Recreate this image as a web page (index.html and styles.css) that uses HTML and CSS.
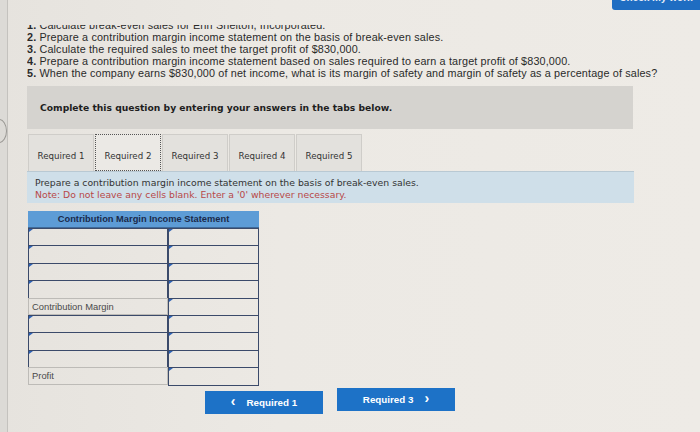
FILE: index.html
```html
<!DOCTYPE html>
<html>
<head>
<meta charset="utf-8">
<link rel="stylesheet" href="styles.css">
</head>
<body>
<div class="page">
  <div class="rail"><div class="rail-knob"></div></div>
  <div class="main">
    <div class="topbar"><div class="check-btn"><span class="check-text">Check my work</span></div></div>
    <div class="questions">
      <ol class="qlist">
        <li><b>1.</b> Calculate break-even sales for Erin Shelton, Incorporated.</li>
        <li><b>2.</b> Prepare a contribution margin income statement on the basis of break-even sales.</li>
        <li><b>3.</b> Calculate the required sales to meet the target profit of $830,000.</li>
        <li><b>4.</b> Prepare a contribution margin income statement based on sales required to earn a target profit of $830,000.</li>
        <li><b>5.</b> When the company earns $830,000 of net income, what is its margin of safety and margin of safety as a percentage of sales?</li>
      </ol>
    </div>
    <div class="instruct">Complete this question by entering your answers in the tabs below.</div>
    <div class="tabs">
      <div class="tab">Required 1</div>
      <div class="tab active">Required 2</div>
      <div class="tab">Required 3</div>
      <div class="tab">Required 4</div>
      <div class="tab">Required 5</div>
    </div>
    <div class="panel">
      <div>Prepare a contribution margin income statement on the basis of break-even sales.</div>
      <div class="note">Note: Do not leave any cells blank. Enter a '0' wherever necessary.</div>
    </div>
    <div class="stmt">
      <div class="stmt-head">Contribution Margin Income Statement</div>
      <div class="grid">
        <div class="cell in"></div><div class="cell in"></div>
        <div class="cell in"></div><div class="cell in"></div>
        <div class="cell in"></div><div class="cell in"></div>
        <div class="cell in"></div><div class="cell in"></div>
        <div class="cell label">Contribution Margin</div><div class="cell in"></div>
        <div class="cell in"></div><div class="cell in"></div>
        <div class="cell in"></div><div class="cell in"></div>
        <div class="cell in"></div><div class="cell in"></div>
        <div class="cell label">Profit</div><div class="cell in"></div>
      </div>
    </div>
    <div class="nav">
      <div class="nav-btn prev"><span class="chev">&lsaquo;</span>Required 1</div>
      <div class="nav-btn next">Required 3<span class="chev">&rsaquo;</span></div>
    </div>
  </div>
</div>
</body>
</html>
```
FILE: styles.css
```css
html, body {
  margin: 0;
  padding: 0;
  background: #ebe8e3;
  overflow: hidden;
}
.page {
  display: flex;
  width: 700px;
  height: 432px;
  overflow: hidden;
  background: linear-gradient(90deg, #e6e3de 0%, #ece9e4 40%, #eeebe6 100%);
}
.rail {
  width: 7px;
  flex: none;
  background: #dcdad6;
  border-right: 1px solid #c4c2be;
  overflow: hidden;
}
.rail-knob {
  width: 14px;
  height: 22px;
  margin-top: 119px;
  margin-left: -9px;
  border: 1px solid #9a9894;
  border-radius: 50%;
}
.main {
  flex: 1;
  padding-left: 19px;
  display: flex;
  flex-direction: column;
}
.topbar {
  height: 25px;
  flex: none;
  display: flex;
  justify-content: flex-end;
  align-items: flex-start;
}
.check-btn {
  width: 88px;
  height: 10px;
  background: #1f6dc2;
  border-radius: 0 0 0 3px;
  overflow: hidden;
  display: flex;
  align-items: flex-start;
  justify-content: center;
}
.check-text {
  font-family: "Liberation Sans", sans-serif;
  font-weight: bold;
  font-size: 10px;
  line-height: 10px;
  margin-top: -7px;
  color: #e8eef8;
  white-space: nowrap;
}
.questions {
  height: 57px;
  flex: none;
  overflow: hidden;
  font-family: "Liberation Sans", sans-serif;
  font-size: 10.8px;
  letter-spacing: 0.15px;
  color: #2a2a2a;
}
.qlist {
  list-style: none;
  margin: -6px 0 0 0;
  padding: 0;
  line-height: 12.1px;
}
.qlist li { white-space: nowrap; }
.qlist b { font-weight: 700; }
.instruct {
  margin-top: 4px;
  width: 593px;
  height: 43px;
  flex: none;
  background: #d5d3cf;
  font-family: "DejaVu Sans", sans-serif;
  font-weight: bold;
  font-size: 9.2px;
  color: #1e1e1e;
  display: flex;
  align-items: center;
  padding-left: 13px;
}
.tabs {
  margin-top: 5px;
  display: flex;
  gap: 1px;
  height: 37px;
  flex: none;
  padding-left: 1px;
}
.tab {
  width: 66px;
  background: #e3e1dd;
  border: 1px solid #cfcdc9;
  border-bottom: none;
  font-family: "DejaVu Sans", sans-serif;
  font-size: 8.7px;
  color: #333;
  display: flex;
  align-items: center;
  justify-content: center;
  padding-top: 6px;
  box-sizing: border-box;
}
.tab.active {
  background: #ebe9e5;
  border: 1px dotted #555;
}
.panel {
  width: 607px;
  height: 32px;
  flex: none;
  background: #cfdfe9;
  border-top: 1px solid #b9c9d3;
  font-family: "DejaVu Sans", sans-serif;
  font-size: 9.3px;
  line-height: 11.5px;
  color: #333;
  padding: 5px 0 0 8px;
  box-sizing: border-box;
}
.note { color: #b84848; }
.stmt {
  margin-top: 8px;
  width: 231px;
  margin-left: 1px;
  flex: none;
}
.stmt-head {
  height: 17px;
  background: #5d9cd6;
  border-bottom: 1px solid #3f6a98;
  font-family: "Liberation Sans", sans-serif;
  font-weight: bold;
  font-size: 9.3px;
  color: #1a2a4a;
  display: flex;
  align-items: center;
  justify-content: center;
  box-sizing: border-box;
}
.grid {
  display: grid;
  grid-template-columns: 140px 91px;
  grid-auto-rows: 17.4px;
}
.cell {
  position: relative;
  box-sizing: border-box;
}
.cell.in {
  border: 1.5px solid #3b4a6a;
  margin: 0 0 -1px 0;
}
.cell.in::before {
  content: "";
  position: absolute;
  left: 0;
  top: 0;
  border-top: 3px solid #2d62b5;
  border-right: 4px solid transparent;
}
.cell.label {
  border: 1px solid #bdbbb7;
  font-family: "Liberation Sans", sans-serif;
  font-size: 9.4px;
  color: #4a4a4a;
  display: flex;
  align-items: center;
  padding-left: 3px;
}
.nav {
  margin-top: 6px;
  display: flex;
  align-items: flex-start;
  gap: 14px;
  padding-left: 178px;
}
.nav-btn {
  width: 118px;
  height: 23px;
  background: #1d72c7;
  color: #fff;
  font-family: "Liberation Sans", sans-serif;
  font-weight: bold;
  font-size: 9.8px;
  display: flex;
  align-items: center;
  justify-content: center;
  gap: 11px;
  box-sizing: border-box;
}
.nav-btn.next { margin-top: -3px; }
.chev {
  font-size: 14px;
  line-height: 1;
  margin-top: -2px;
}
```
